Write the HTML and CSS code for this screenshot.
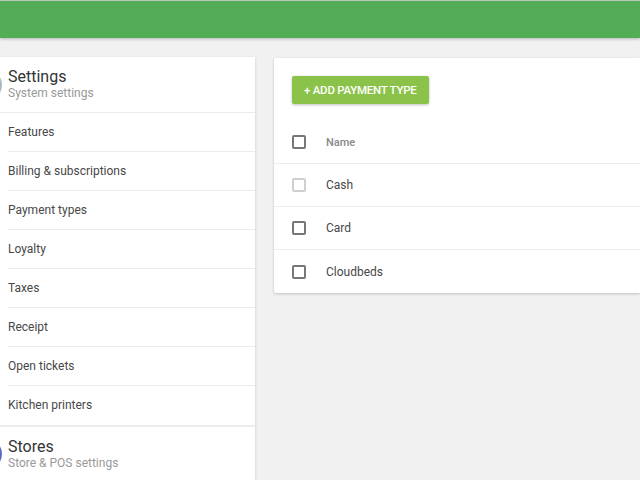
FILE: index.html
```html
<!DOCTYPE html>
<html>
<head>
<meta charset="utf-8">
<link rel="stylesheet" href="styles.css">
</head>
<body>
<header class="topbar"></header>
<main class="layout">
  <nav class="sidebar">
    <div class="group-head">
      <span class="group-icon icon-settings"></span>
      <div class="group-text">
        <div class="group-title">Settings</div>
        <div class="group-sub">System settings</div>
      </div>
    </div>
    <ul class="menu">
      <li class="menu-item">Features</li>
      <li class="menu-item">Billing &amp; subscriptions</li>
      <li class="menu-item">Payment types</li>
      <li class="menu-item">Loyalty</li>
      <li class="menu-item">Taxes</li>
      <li class="menu-item">Receipt</li>
      <li class="menu-item">Open tickets</li>
      <li class="menu-item">Kitchen printers</li>
    </ul>
    <div class="group-head group-stores">
      <span class="group-icon icon-stores"></span>
      <div class="group-text">
        <div class="group-title">Stores</div>
        <div class="group-sub">Store &amp; POS settings</div>
      </div>
    </div>
  </nav>
  <section class="content">
    <div class="card">
      <button class="add-btn">+ Add payment type</button>
      <div class="table">
        <div class="row row-head">
          <span class="check"></span>
          <span class="col-name">Name</span>
        </div>
        <div class="row">
          <span class="check check-disabled"></span>
          <span class="cell">Cash</span>
        </div>
        <div class="row">
          <span class="check"></span>
          <span class="cell">Card</span>
        </div>
        <div class="row">
          <span class="check"></span>
          <span class="cell">Cloudbeds</span>
        </div>
      </div>
    </div>
  </section>
</main>
</body>
</html>
```

FILE: styles.css
```css
* { box-sizing: border-box; }
html, body {
  margin: 0;
  padding: 0;
  background: #f1f1f1;
  font-family: Roboto, "Liberation Sans", sans-serif;
  overflow: hidden;
}
.topbar {
  height: 38px;
  background: #52ad56;
  border-top: 1px solid #b9c9b9;
  box-shadow: 0 1px 3px rgba(0,0,0,0.25);
}
.layout {
  display: flex;
  align-items: flex-start;
  gap: 19px;
  padding-top: 19px;
}
.sidebar {
  width: 255px;
  flex: none;
  background: #fff;
  box-shadow: 0 1px 3px rgba(0,0,0,0.15);
  min-height: 440px;
}
.group-head {
  display: flex;
  align-items: center;
  height: 56px;
  border-bottom: 1px solid #ebebeb;
}
.group-stores {
  border-bottom: none;
  border-top: 2px solid #ececec;
  height: 56px;
}
.group-icon {
  width: 32px;
  height: 32px;
  border-radius: 50%;
  margin-left: -30px;
  margin-right: 6px;
  flex: none;
}
.icon-settings { background: #aab8c6; }
.icon-stores { background: #5c6bc0; }
.group-title {
  font-size: 16px;
  color: #333;
  line-height: 18px;
}
.group-sub {
  font-size: 12px;
  color: #999;
  line-height: 15px;
}
.menu {
  list-style: none;
  margin: 0;
  padding: 0;
}
.menu-item {
  margin-left: 8px;
  height: 39px;
  line-height: 38px;
  border-bottom: 1px solid #ececec;
  font-size: 12px;
  color: #484848;
}
.menu-item:last-child { border-bottom: none; }
.content {
  flex: 1;
  padding-top: 1px;
}
.card {
  background: #fff;
  box-shadow: 0 1px 3px rgba(0,0,0,0.2);
  border-radius: 2px 0 0 2px;
  padding: 18px 0 0 0;
}
.add-btn {
  margin-left: 18px;
  height: 28px;
  padding: 0 12px;
  border: none;
  border-radius: 2px;
  background: #8bc34a;
  color: #fff;
  font-family: Roboto, "Liberation Sans", sans-serif;
  font-size: 11.5px;
  font-weight: 500;
  letter-spacing: -0.25px;
  text-transform: uppercase;
  box-shadow: 0 1px 3px rgba(0,0,0,0.25);
}
.table { margin-top: 17px; }
.row {
  display: flex;
  align-items: center;
  height: 43px;
  padding-left: 18px;
  border-bottom: 1px solid #ececec;
}
.row:last-child { border-bottom: none; }
.check {
  width: 14px;
  height: 14px;
  border: 2px solid #777;
  border-radius: 2px;
  flex: none;
}
.check-disabled { border-color: #cfcfcf; }
.col-name {
  margin-left: 20px;
  font-size: 11px;
  font-weight: 500;
  color: #888;
}
.cell {
  margin-left: 20px;
  font-size: 12px;
  color: #484848;
}
```
